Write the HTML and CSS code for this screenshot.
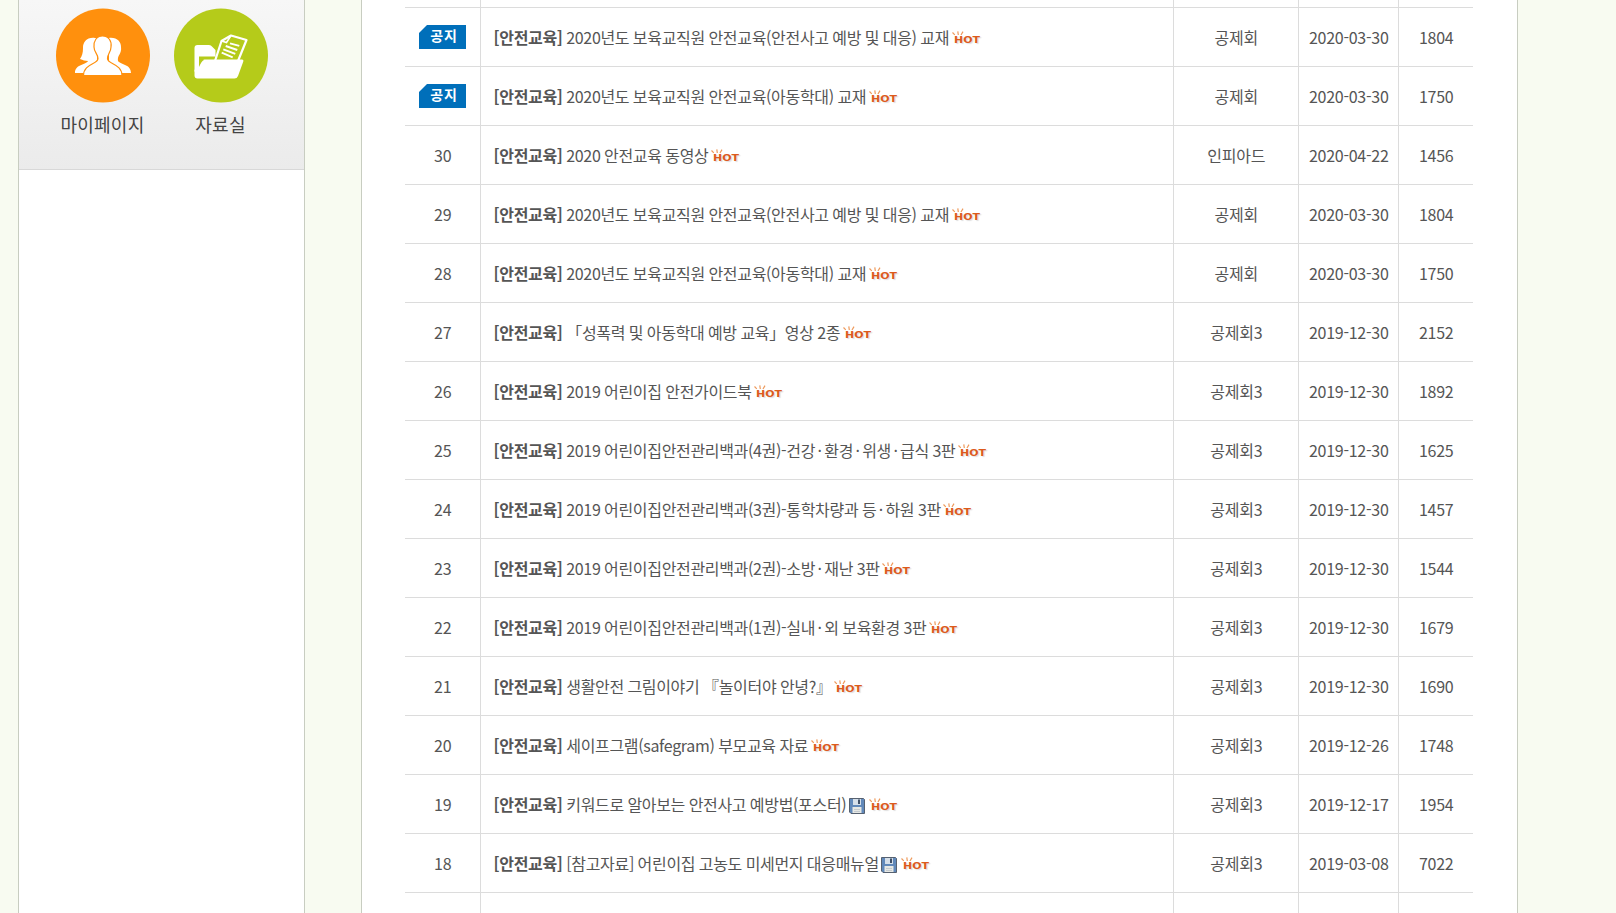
FILE: index.html
```html
<!DOCTYPE html>
<html lang="ko">
<head>
  <meta charset="UTF-8" />
  <meta name="viewport" content="width=device-width, initial-scale=1.0">
  <title>자료실</title>
  <link rel="stylesheet" href="styles.css">
</head>
<body>

  <div class="wrap">
    <aside class="sidebar">
      <div class="quick">
        <a class="quick-item" href="#">
          <svg width="94" height="95" viewBox="0 0 94 95">
            <circle cx="47" cy="47.5" r="47" fill="#ff900d"/>
            <path d="M39 30c-8-1-12 4-12 10 0 5-1 8-3 11 3 1 5 2 8 2-2 4-13 3-13 12h22V30zM53 30c8-1 12 4 12 9 1 7-4 8-3 14 3 4 13 3 13 12H53z" fill="#fff"/>
            <path d="M46.5 28c-6 0-9 5-8.5 11 0 5 4 7 4 11.500 0 6-14.500 5-14.500 17h38.500c0-12-14.500-11-14.500-17 0-4.500 3.500-6.500 3.500-11.500 1-6-2.500-11-8.500-11z" fill="#fff" stroke="#ff900d" stroke-width="1.2"/>
          </svg>
          <span>마이페이지</span>
        </a>
        <a class="quick-item" href="#">
          <svg width="94" height="95" viewBox="0 0 94 95">
            <circle cx="47" cy="47.5" r="47" fill="#b5cb1a"/>
            <path d="M20.5 40q0-3 3-3h11.500q2 0 3.500 2l3 3v10H28l-7.500 12z" fill="#fff"/>
            <path d="M25 60V48.500h16V52H30q-2 0-3 2z" fill="#b5cb1a"/>
            <path d="M41 53l6.500-20 9.500-5.500 15.500 4.500-8.500 21z" fill="#b5cb1a" stroke="#fff" stroke-width="2.2" stroke-linejoin="round"/>
            <path d="M47.5 33l5 1.500L57 27.500" fill="none" stroke="#fff" stroke-width="1.6"/>
            <path d="M56 35.300l9.300 2.600M51.700 38l11.600 4M49.300 41.300l12 4.500M47.700 44.700l11 4.700" stroke="#fff" stroke-width="1.9"/>
            <path d="M20.5 62l6-8q1.500-2.500 4-2.500H68q2 0 1.300 2L64 68q-1 2.500-3.500 2.500h-37q-3 0-3-3z" fill="#fff"/>
            <path d="M25 59V52h5q-2.500 1-5 7z" fill="#b5cb1a"/>
          </svg>
          <span>자료실</span>
        </a>
      </div>
    </aside>

    <main class="content">
      <table class="board">
        <colgroup>
          <col class="col-num"><col class="col-title"><col class="col-writer"><col class="col-date"><col class="col-hit">
        </colgroup>
        <tbody id="boardList"></tbody>
      </table>
    </main>
  </div>

  <script>
    const posts = [
      { num: "공지", title: "2020년도 보육교직원 안전교육(안전사고 예방 및 대응) 교재", writer: "공제회", date: "2020-03-30", hit: 1804 },
      { num: "공지", title: "2020년도 보육교직원 안전교육(아동학대) 교재", writer: "공제회", date: "2020-03-30", hit: 1750 },
      { num: 30, title: "2020 안전교육 동영상", writer: "인피아드", date: "2020-04-22", hit: 1456 },
      { num: 29, title: "2020년도 보육교직원 안전교육(안전사고 예방 및 대응) 교재", writer: "공제회", date: "2020-03-30", hit: 1804 },
      { num: 28, title: "2020년도 보육교직원 안전교육(아동학대) 교재", writer: "공제회", date: "2020-03-30", hit: 1750 },
      { num: 27, title: "「성폭력 및 아동학대 예방 교육」영상 2종", writer: "공제회3", date: "2019-12-30", hit: 2152 },
      { num: 26, title: "2019 어린이집 안전가이드북", writer: "공제회3", date: "2019-12-30", hit: 1892 },
      { num: 25, title: "2019 어린이집안전관리백과(4권)-건강·환경·위생·급식 3판", writer: "공제회3", date: "2019-12-30", hit: 1625 },
      { num: 24, title: "2019 어린이집안전관리백과(3권)-통학차량과 등·하원 3판", writer: "공제회3", date: "2019-12-30", hit: 1457 },
      { num: 23, title: "2019 어린이집안전관리백과(2권)-소방·재난 3판", writer: "공제회3", date: "2019-12-30", hit: 1544 },
      { num: 22, title: "2019 어린이집안전관리백과(1권)-실내·외 보육환경 3판", writer: "공제회3", date: "2019-12-30", hit: 1679 },
      { num: 21, title: "생활안전 그림이야기 『놀이터야 안녕?』", writer: "공제회3", date: "2019-12-30", hit: 1690 },
      { num: 20, title: "세이프그램(safegram) 부모교육 자료", writer: "공제회3", date: "2019-12-26", hit: 1748 },
      { num: 19, title: "키워드로 알아보는 안전사고 예방법(포스터)", writer: "공제회3", date: "2019-12-17", hit: 1954, file: true },
      { num: 18, title: "[참고자료] 어린이집 고농도 미세먼지 대응매뉴얼", writer: "공제회3", date: "2019-03-08", hit: 7022, file: true }
    ];

    const hotIcon = `<svg class="hot" viewBox="0 0 30 15">
      <path d="M.5 1.500l2.300 2.300M5.800.3l.5 3.700M11 .6L9 4" stroke="#ee9a5c" stroke-width="1.2" fill="none"/>
      <text x="2" y="12" textLength="26" lengthAdjust="spacingAndGlyphs">HOT</text>
    </svg>`;

    const diskIcon = `<svg class="disk" viewBox="0 0 16 16">
      <path d="M.5.5h14l1 1v14H2L.5 14z" fill="#6189ba" stroke="#566170"/>
      <rect x="4" y="1" width="8" height="6" fill="#d5dfe9"/>
      <rect x="9" y="1.5" width="2" height="4.5" fill="#3f4f66"/>
      <rect x="3.5" y="9" width="9" height="6" fill="#e6e8e4"/>
      <path d="M5 11.500h6M5 13.500h6" stroke="#c4cacf"/>
    </svg>`;

    const emptyRow = "<tr><td></td><td></td><td></td><td></td><td></td></tr>";

    function renderPosts(list) {
      const rows = list.map(post => `
        <tr>
          <td>${post.num === "공지" ? '<span class="notice">공지</span>' : post.num}</td>
          <td class="title"><a href="#"><strong>[안전교육]</strong> ${post.title.replace(/·/g, '<span class="dot">·</span>')}</a>${post.file ? diskIcon : ""}${hotIcon}</td>
          <td>${post.writer}</td>
          <td>${post.date}</td>
          <td>${post.hit}</td>
        </tr>`);
      document.getElementById("boardList").innerHTML = emptyRow + rows.join("") + emptyRow;
    }

    renderPosts(posts);
  </script>

</body>
</html>
```
FILE: styles.css
```css
body {
  margin: 0;
  background: #f8fbf1;
  font-family: 'Noto Sans CJK KR', sans-serif;
  font-size: 16px;
  color: #555;
  overflow: hidden;
}

a {
  color: inherit;
  text-decoration: none;
}

.wrap {
  display: flex;
  gap: 56px;
  height: 913px;
  padding-left: 18px;
  overflow: hidden;
}

.sidebar {
  box-sizing: border-box;
  width: 287px;
  background: #fff;
  border: solid #c8cdc1;
  border-width: 0 1px;
}

.quick {
  box-sizing: border-box;
  display: flex;
  justify-content: center;
  gap: 24px;
  height: 170px;
  padding: 8px 0 0;
  background: linear-gradient(#f7f7f7, #ebebeb);
  border-bottom: 1px solid #d8d8d8;
}

.quick-item {
  display: flex;
  flex-direction: column;
  align-items: center;
  width: 94px;
  font-size: 18px;
  line-height: 26px;
  letter-spacing: 0.2px;
  color: #444;
  white-space: nowrap;
}

.quick-item span {
  margin-top: 8px;
}

.content {
  box-sizing: border-box;
  width: 1157px;
  padding-left: 43px;
  background: #fff;
  border: solid #c8cdc1;
  border-width: 0 1px;
}

.board {
  width: 1068px;
  margin-top: -52px;
  table-layout: fixed;
  border-collapse: separate;
  border-spacing: 0;
  letter-spacing: -0.25px;
}

.col-num { width: 76px; }
.col-title { width: 693px; }
.col-writer { width: 125px; }
.col-date { width: 100px; }
.col-hit { width: 74px; }

.board td {
  box-sizing: border-box;
  height: 59px;
  padding: 0 0 0 0.5px;
  border-right: 1px solid #dcdcdc;
  border-top: 1px solid #dcdcdc;
  text-align: center;
  vertical-align: middle;
  line-height: 24px;
  white-space: nowrap;
}

.board td:last-child {
  border-right: 0;
}

.board .title {
  padding-left: 12.6px;
  text-align: left;
  letter-spacing: -0.33px;
  word-spacing: -0.5px;
}

.dot {
  padding: 0 2.5px;
}

.notice {
  display: block;
  width: 47px;
  height: 24px;
  margin: 0 0 0 13.5px;
  padding-left: 1px;
  box-sizing: border-box;
  background: #006fba;
  clip-path: polygon(8px 0, 100% 0, 100% 100%, 0 100%, 0 8px);
  color: #fff;
  font-size: 14px;
  font-weight: 700;
  line-height: 21px;
  text-indent: 2px;
  letter-spacing: 0.8px;
}

.disk {
  width: 16px;
  height: 16px;
  margin-left: 2.5px;
  margin-right: 1.5px;
  vertical-align: -3px;
}

.hot {
  width: 30px;
  height: 15px;
  margin-left: 2.5px;
  vertical-align: -2px;
  overflow: visible;
}

.hot text {
  font-family: 'DejaVu Sans', sans-serif;
  font-size: 9px;
  font-weight: 700;
  letter-spacing: 0;
  fill: #dd5a1c;
  text-shadow: 1px 1px 1px #ddd;
}
```
